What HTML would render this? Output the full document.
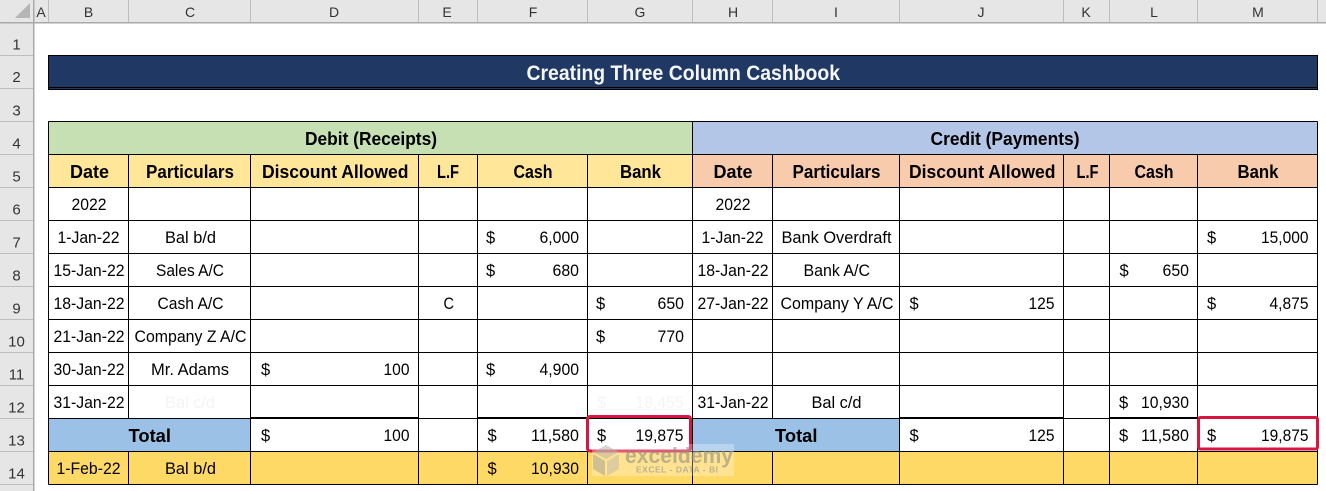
<!DOCTYPE html>
<html lang="en">
<head>
<meta charset="utf-8">
<title>Creating Three Column Cashbook</title>
<style>
html,body{margin:0;padding:0;background:#fff;width:1326px;height:491px;overflow:hidden}
svg{display:block;position:absolute;left:0;top:0}
text{font-family:"Liberation Sans",sans-serif;white-space:pre}
.h text{font-size:14px;fill:#333;text-anchor:middle}
.r text{font-size:15px;fill:#333;text-anchor:middle}
.t text{font-size:16.5px;fill:#000}
.b text{font-size:18px;font-weight:700;fill:#000}
</style>
</head>
<body>
<svg width="1326" height="491" viewBox="0 0 1326 491" xmlns="http://www.w3.org/2000/svg">
<!-- sheet chrome -->
<rect x="0" y="0" width="1326" height="22" fill="#e6e6e6"/>
<rect x="0" y="0" width="33" height="491" fill="#e6e6e6"/>
<rect x="0" y="22" width="1326" height="1.5" fill="#a9a9a9"/>
<rect x="33" y="0" width="1.5" height="491" fill="#a9a9a9"/>
<polygon points="15,18 30,18 30,3" fill="#b5b5b5"/>
<g stroke="#bdbdbd" stroke-width="1" fill="none">
<path d="M48.5 0V22M128.5 0V22M250.5 0V22M418.5 0V22M477.5 0V22M587.5 0V22M692.5 0V22M772.5 0V22M899.5 0V22M1063.5 0V22M1109.5 0V22M1197.5 0V22M1317.5 0V22"/>
<path d="M0 55.5H33M0 88.5H33M0 121.5H33M0 154.5H33M0 187.5H33M0 220.5H33M0 253.5H33M0 286.5H33M0 319.5H33M0 352.5H33M0 385.5H33M0 418.5H33M0 451.5H33M0 484.5H33"/>
</g>
<g class="h">
<text x="41" y="17">A</text><text x="88.5" y="17">B</text><text x="190" y="17">C</text><text x="334" y="17">D</text><text x="447" y="17">E</text><text x="533" y="17">F</text><text x="640" y="17">G</text><text x="733" y="17">H</text><text x="836" y="17">I</text><text x="981" y="17">J</text><text x="1086" y="17">K</text><text x="1154" y="17">L</text><text x="1258" y="17">M</text>
</g>
<g class="r">
<text x="16.5" y="49.5">1</text><text x="16.5" y="82">2</text><text x="16.5" y="115.5">3</text><text x="16.5" y="148.5">4</text><text x="16.5" y="181.5">5</text><text x="16.5" y="214.5">6</text><text x="16.5" y="247.5">7</text><text x="16.5" y="280.5">8</text><text x="16.5" y="313.5">9</text><text x="16.5" y="346.5">10</text><text x="16.5" y="379.5">11</text><text x="16.5" y="412.5">12</text><text x="16.5" y="445.5">13</text><text x="16.5" y="478.5">14</text>
</g>

<!-- fills -->
<rect x="48" y="55" width="1270" height="35" fill="#203864"/>
<rect x="48" y="121" width="644" height="33" fill="#c6e0b4"/>
<rect x="692" y="121" width="626" height="33" fill="#b4c6e7"/>
<rect x="48" y="154" width="644" height="33" fill="#ffe699"/>
<rect x="692" y="154" width="626" height="33" fill="#f8cbad"/>
<rect x="48" y="418" width="202" height="33" fill="#9bc2e6"/>
<rect x="692" y="418" width="207" height="33" fill="#9bc2e6"/>
<rect x="48" y="451" width="1270" height="33" fill="#ffd966"/>

<!-- grid -->
<g stroke="#000" stroke-width="1" fill="none">
<path d="M48.5 55.5H1317.5V89.5H48.5ZM48.5 87.5H1317.5"/>
<path d="M48.5 121.5H1317.5M48.5 154.5H1317.5M48.5 187.5H1317.5M48.5 220.5H1317.5M48.5 253.5H1317.5M48.5 286.5H1317.5M48.5 319.5H1317.5M48.5 352.5H1317.5M48.5 385.5H1317.5M48.5 418.5H1317.5M48.5 451.5H1317.5M48.5 484.5H1317.5"/>
<path d="M48.5 121.5V484.5M692.5 121.5V484.5M1317.5 121.5V484.5"/>
<path d="M128.5 154.5V418M128.5 451.5V484.5M772.5 154.5V418M772.5 451.5V484.5"/>
<path d="M250.5 154.5V484.5M418.5 154.5V484.5M477.5 154.5V484.5M587.5 154.5V484.5M899.5 154.5V484.5M1063.5 154.5V484.5M1109.5 154.5V484.5M1197.5 154.5V484.5"/>
</g>
<g fill="#000">
<rect x="250" y="417" width="169" height="2"/>
<rect x="477" y="417" width="111" height="2"/>
<rect x="899" y="417" width="165" height="2"/>
<rect x="1109" y="417" width="89" height="2"/>
</g>

<!-- title and headers -->
<text x="526.5" y="80" font-size="21.5" font-weight="700" fill="#f4f6fa" textLength="313.5" lengthAdjust="spacingAndGlyphs">Creating Three Column Cashbook</text>
<g class="b">
<text x="305" y="145" textLength="132" lengthAdjust="spacingAndGlyphs">Debit (Receipts)</text>
<text x="930.5" y="145" textLength="149" lengthAdjust="spacingAndGlyphs">Credit (Payments)</text>
<text x="70" y="178" textLength="39" lengthAdjust="spacingAndGlyphs">Date</text>
<text x="146" y="178" textLength="88" lengthAdjust="spacingAndGlyphs">Particulars</text>
<text x="262" y="178" textLength="146.5" lengthAdjust="spacingAndGlyphs">Discount Allowed</text>
<text x="437" y="178" textLength="22" lengthAdjust="spacingAndGlyphs">L.F</text>
<text x="513.5" y="178" textLength="39" lengthAdjust="spacingAndGlyphs">Cash</text>
<text x="620" y="178" textLength="41" lengthAdjust="spacingAndGlyphs">Bank</text>
<text x="713.5" y="178" textLength="39" lengthAdjust="spacingAndGlyphs">Date</text>
<text x="792.5" y="178" textLength="88" lengthAdjust="spacingAndGlyphs">Particulars</text>
<text x="909" y="178" textLength="146.5" lengthAdjust="spacingAndGlyphs">Discount Allowed</text>
<text x="1076.5" y="178" textLength="22" lengthAdjust="spacingAndGlyphs">L.F</text>
<text x="1134.5" y="178" textLength="39" lengthAdjust="spacingAndGlyphs">Cash</text>
<text x="1237.5" y="178" textLength="41" lengthAdjust="spacingAndGlyphs">Bank</text>
<text x="128.5" y="442" textLength="42.5" lengthAdjust="spacingAndGlyphs">Total</text>
<text x="775" y="442" textLength="42.5" lengthAdjust="spacingAndGlyphs">Total</text>
</g>

<!-- body text -->
<g class="t" transform="translate(0,-0.5)">
<!-- B dates -->
<text x="71.5" y="210.5" textLength="35" lengthAdjust="spacingAndGlyphs">2022</text>
<text x="57.5" y="243.5" textLength="62" lengthAdjust="spacingAndGlyphs">1-Jan-22</text>
<text x="53.5" y="276.5" textLength="71" lengthAdjust="spacingAndGlyphs">15-Jan-22</text>
<text x="53.5" y="309.5" textLength="71" lengthAdjust="spacingAndGlyphs">18-Jan-22</text>
<text x="53.5" y="342.5" textLength="71" lengthAdjust="spacingAndGlyphs">21-Jan-22</text>
<text x="53.5" y="375.5" textLength="71" lengthAdjust="spacingAndGlyphs">30-Jan-22</text>
<text x="53.5" y="408.5" textLength="71" lengthAdjust="spacingAndGlyphs">31-Jan-22</text>
<text x="56.5" y="474.5" textLength="64" lengthAdjust="spacingAndGlyphs">1-Feb-22</text>
<!-- C particulars -->
<text x="165" y="243.5" textLength="51" lengthAdjust="spacingAndGlyphs">Bal b/d</text>
<text x="156" y="276.5" textLength="68" lengthAdjust="spacingAndGlyphs">Sales A/C</text>
<text x="157.5" y="309.5" textLength="66" lengthAdjust="spacingAndGlyphs">Cash A/C</text>
<text x="134.5" y="342.5" textLength="112" lengthAdjust="spacingAndGlyphs">Company Z A/C</text>
<text x="151" y="375.5" textLength="78" lengthAdjust="spacingAndGlyphs">Mr. Adams</text>
<text x="165" y="408.5" textLength="50" lengthAdjust="spacingAndGlyphs" style="fill:#f4f4f4">Bal c/d</text>
<text x="165" y="474.5" textLength="51" lengthAdjust="spacingAndGlyphs">Bal b/d</text>
<!-- D -->
<text x="261" y="375.5">$</text>
<text x="383.5" y="375.5" textLength="26" lengthAdjust="spacingAndGlyphs">100</text>
<text x="261" y="441.5">$</text>
<text x="383.5" y="441.5" textLength="26" lengthAdjust="spacingAndGlyphs">100</text>
<!-- E -->
<text x="443.5" y="309.5" textLength="10.5" lengthAdjust="spacingAndGlyphs">C</text>
<!-- F -->
<text x="486" y="243.5">$</text>
<text x="539.5" y="243.5" textLength="39.5" lengthAdjust="spacingAndGlyphs">6,000</text>
<text x="486" y="276.5">$</text>
<text x="552.5" y="276.5" textLength="26.5" lengthAdjust="spacingAndGlyphs">680</text>
<text x="486" y="375.5">$</text>
<text x="539.5" y="375.5" textLength="39.5" lengthAdjust="spacingAndGlyphs">4,900</text>
<text x="487.5" y="441.5">$</text>
<text x="531" y="441.5" textLength="48" lengthAdjust="spacingAndGlyphs">11,580</text>
<text x="487.5" y="474.5">$</text>
<text x="531" y="474.5" textLength="48" lengthAdjust="spacingAndGlyphs">10,930</text>
<!-- G -->
<text x="596" y="309.5">$</text>
<text x="657.5" y="309.5" textLength="26.5" lengthAdjust="spacingAndGlyphs">650</text>
<text x="596" y="342.5">$</text>
<text x="657.5" y="342.5" textLength="26.5" lengthAdjust="spacingAndGlyphs">770</text>
<text x="597" y="408.5" style="fill:#f4f4f4">$</text>
<text x="635.5" y="408.5" textLength="48" lengthAdjust="spacingAndGlyphs" style="fill:#f4f4f4">18,455</text>
<text x="597" y="441.5">$</text>
<text x="635.5" y="441.5" textLength="48" lengthAdjust="spacingAndGlyphs">19,875</text>
<!-- H -->
<text x="715.5" y="210.5" textLength="35" lengthAdjust="spacingAndGlyphs">2022</text>
<text x="701.5" y="243.5" textLength="62" lengthAdjust="spacingAndGlyphs">1-Jan-22</text>
<text x="697.5" y="276.5" textLength="71" lengthAdjust="spacingAndGlyphs">18-Jan-22</text>
<text x="697.5" y="309.5" textLength="71" lengthAdjust="spacingAndGlyphs">27-Jan-22</text>
<text x="697.5" y="408.5" textLength="71" lengthAdjust="spacingAndGlyphs">31-Jan-22</text>
<!-- I -->
<text x="781.5" y="243.5" textLength="110" lengthAdjust="spacingAndGlyphs">Bank Overdraft</text>
<text x="803.5" y="276.5" textLength="66.5" lengthAdjust="spacingAndGlyphs">Bank A/C</text>
<text x="780.5" y="309.5" textLength="113" lengthAdjust="spacingAndGlyphs">Company Y A/C</text>
<text x="811.5" y="408.5" textLength="50" lengthAdjust="spacingAndGlyphs">Bal c/d</text>
<!-- J -->
<text x="909.5" y="309.5">$</text>
<text x="1028.5" y="309.5" textLength="26" lengthAdjust="spacingAndGlyphs">125</text>
<text x="909.5" y="441.5">$</text>
<text x="1028.5" y="441.5" textLength="26" lengthAdjust="spacingAndGlyphs">125</text>
<!-- L -->
<text x="1119.5" y="276.5">$</text>
<text x="1162.5" y="276.5" textLength="26.5" lengthAdjust="spacingAndGlyphs">650</text>
<text x="1119" y="408.5">$</text>
<text x="1141" y="408.5" textLength="48" lengthAdjust="spacingAndGlyphs">10,930</text>
<text x="1119" y="441.5">$</text>
<text x="1141" y="441.5" textLength="48" lengthAdjust="spacingAndGlyphs">11,580</text>
<!-- M -->
<text x="1207" y="243.5">$</text>
<text x="1261" y="243.5" textLength="47.5" lengthAdjust="spacingAndGlyphs">15,000</text>
<text x="1207" y="309.5">$</text>
<text x="1269.5" y="309.5" textLength="39" lengthAdjust="spacingAndGlyphs">4,875</text>
<text x="1207" y="441.5">$</text>
<text x="1261" y="441.5" textLength="47.5" lengthAdjust="spacingAndGlyphs">19,875</text>
</g>

<!-- highlight boxes -->
<rect x="587.5" y="416.5" width="103" height="34.5" rx="2.5" fill="none" stroke="#d9163f" stroke-width="3"/>
<rect x="1198.5" y="417.5" width="119" height="31.5" rx="2" fill="none" stroke="#d9163f" stroke-width="3"/>

<!-- watermark -->
<rect x="592" y="444" width="142" height="32" fill="#ffffff" fill-opacity="0.28"/>
<g fill-opacity="0.55">
<polygon points="606,445 619,452 606,459 593,452" fill="#b9b5a8"/>
<polygon points="593,454 605,461 605,476 593,469" fill="#a8a498"/>
<polygon points="619,454 607,461 607,476 619,469" fill="#c2bcab"/>
</g>
<text x="625" y="463" font-size="22" font-weight="700" fill="#8f8d86" fill-opacity="0.6" textLength="108" lengthAdjust="spacingAndGlyphs">exceldemy</text>
<text x="636" y="472.5" font-size="8.5" font-weight="700" fill="#a09c90" fill-opacity="0.7" textLength="82" lengthAdjust="spacing">EXCEL - DATA - BI</text>
</svg>
</body>
</html>
